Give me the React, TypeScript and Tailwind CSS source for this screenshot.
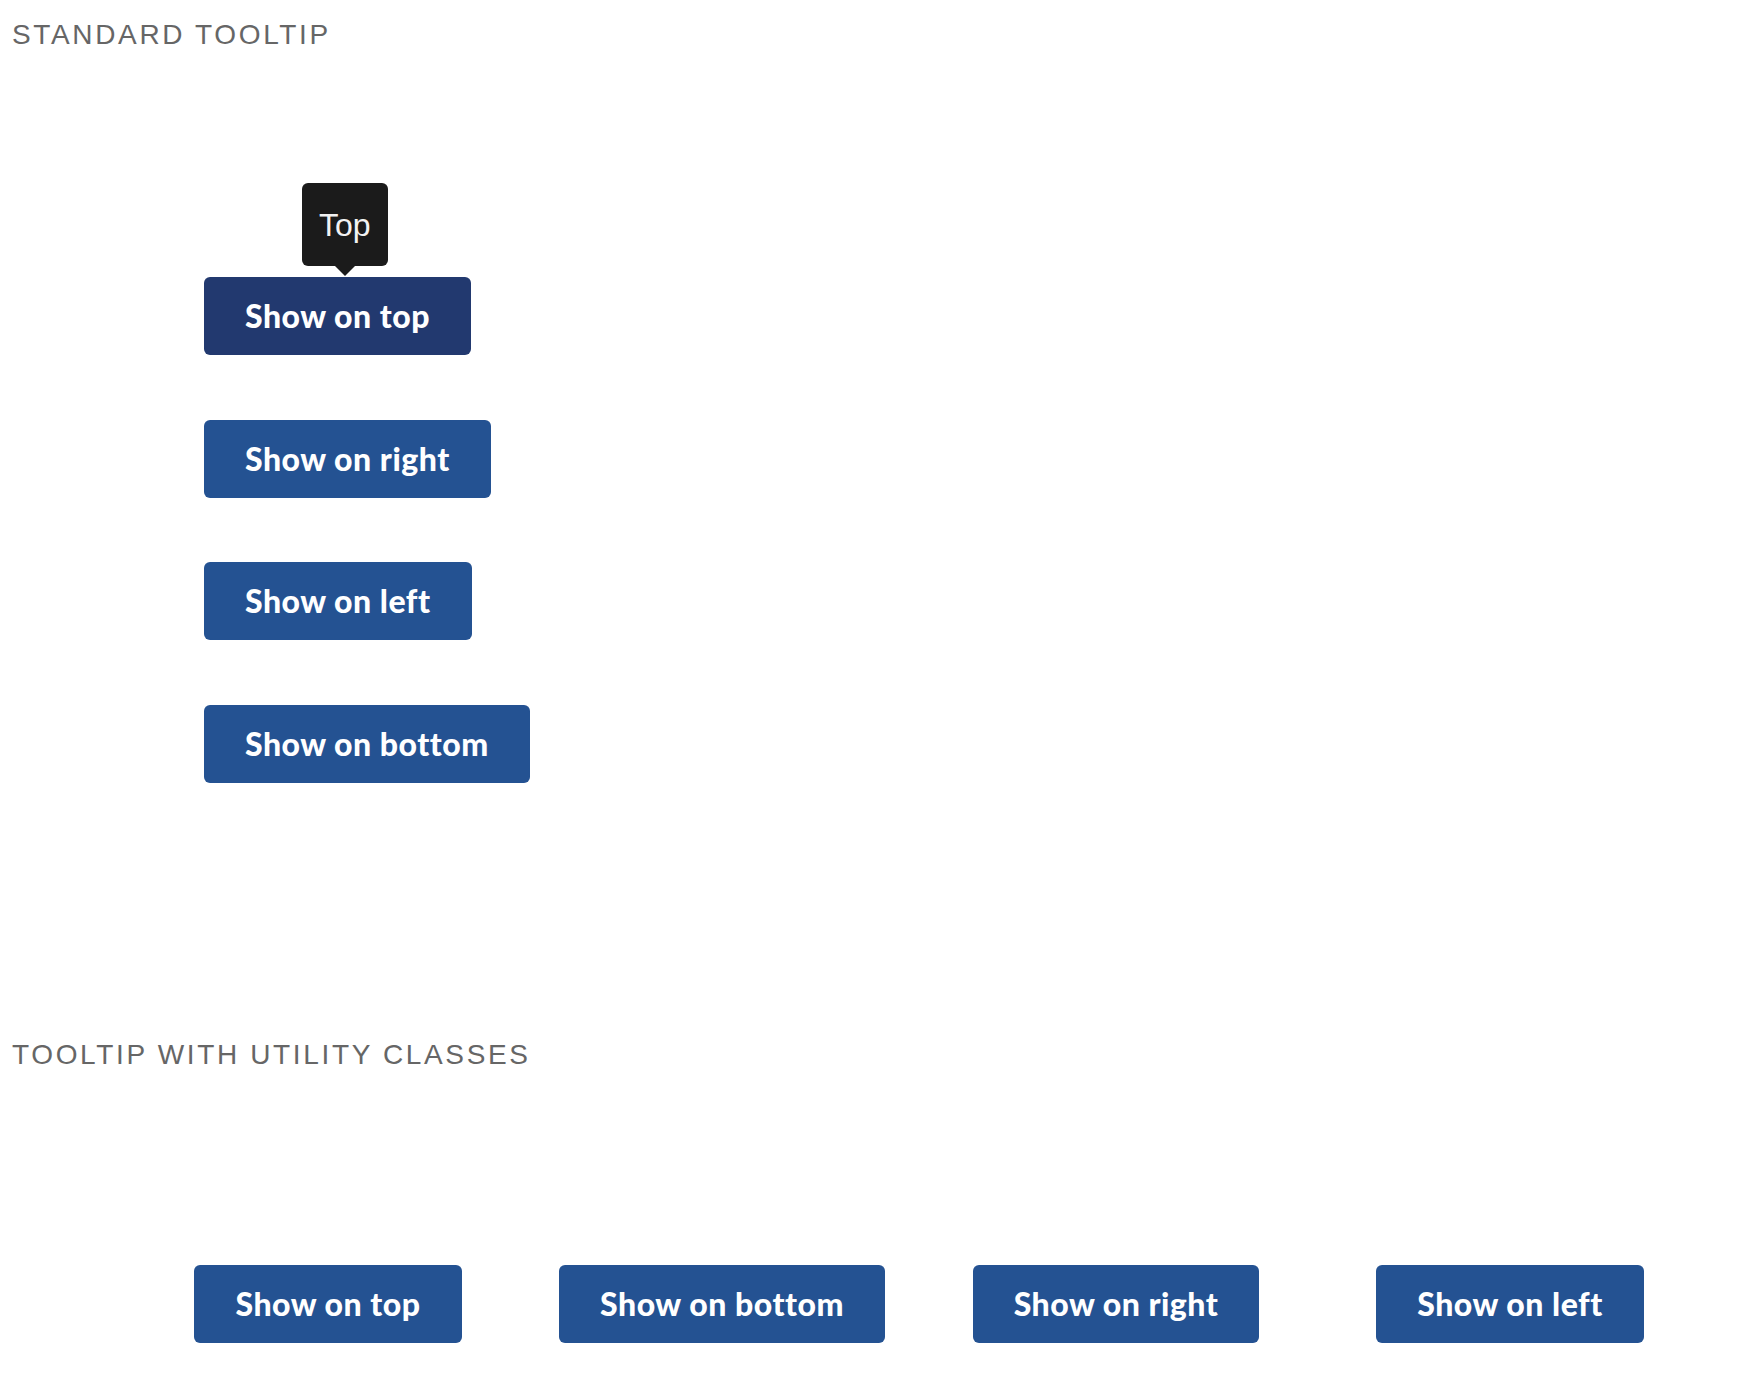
import React from 'react'

const btnFont = { fontFamily: 'Lato, "Open Sans", sans-serif' }
const headFont = { fontFamily: '"Liberation Sans", Arial, sans-serif' }

interface ButtonProps {
  label: string;
  active?: boolean;
  tooltip?: string;
}

const TipButton: React.FC<ButtonProps> = ({ label, active, tooltip }) => {
  return (
    <div className="relative w-fit">
      <button
        style={btnFont}
        className={`h-[78px] px-[41px] rounded-[6px] text-white text-[32px] font-black tracking-[0.5px] leading-none whitespace-nowrap ${active ? 'bg-[#22396f]' : 'bg-[#245292]'}`}
      >
        {label}
      </button>
      {tooltip && (
        <div className="absolute left-[98px] top-[-94px] flex flex-col items-center">
          <div
            style={headFont}
            className="h-[83px] px-[17px] flex items-center rounded-[6px] bg-[#1b1b1b] text-[#f2f2f2] text-[32px] leading-none"
          >
            {tooltip}
          </div>
          <div className="w-0 h-0 border-l-[10px] border-r-[10px] border-t-[10px] border-l-transparent border-r-transparent border-t-[#1b1b1b]" />
        </div>
      )}
    </div>
  )
}

const Heading: React.FC<{ children: React.ReactNode; className?: string }> = ({ children, className }) => (
  <h2
    style={headFont}
    className={`text-[28px] leading-[42px] tracking-[2.65px] text-[#666666] uppercase ${className ?? ''}`}
  >
    {children}
  </h2>
)

export default function App() {
  return (
    <div className="min-h-screen bg-white px-3">
      {/* Standard tooltip */}
      <Heading className="pt-[14px]">Standard Tooltip</Heading>
      <div className="ml-[192px] mt-[221px] flex flex-col gap-[64.5px]">
        <TipButton label="Show on top" active tooltip="Top" />
        <TipButton label="Show on right" />
        <TipButton label="Show on left" />
        <TipButton label="Show on bottom" />
      </div>

      {/* Tooltip with utility classes */}
      <Heading className="mt-[251px]">Tooltip with utility classes</Heading>
      <div className="ml-[119px] mt-[189px] w-[1576px] grid grid-cols-4 justify-items-center">
        <TipButton label="Show on top" />
        <TipButton label="Show on bottom" />
        <TipButton label="Show on right" />
        <TipButton label="Show on left" />
      </div>
    </div>
  )
}
